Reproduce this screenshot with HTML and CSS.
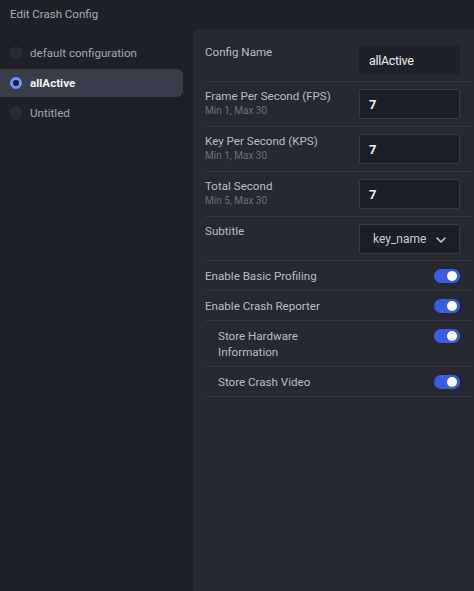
FILE: index.html
```html
<!DOCTYPE html>
<html>
<head>
<meta charset="utf-8">
<link rel="stylesheet" href="styles.css">
</head>
<body>
<div class="app">
  <header class="title">Edit Crash Config</header>
  <div class="main">
    <aside class="sidebar">
      <div class="item"><span class="radio"></span><span class="item-label">default configuration</span></div>
      <div class="item selected"><span class="radio"></span><span class="item-label">allActive</span></div>
      <div class="item"><span class="radio"></span><span class="item-label">Untitled</span></div>
    </aside>
    <section class="panel">
      <div class="row">
        <div class="label"><div class="name">Config Name</div></div>
        <div class="field plain">allActive</div>
      </div>
      <div class="row">
        <div class="label"><div class="name">Frame Per Second (FPS)</div><div class="hint">Min 1, Max 30</div></div>
        <div class="field num">7</div>
      </div>
      <div class="row">
        <div class="label"><div class="name">Key Per Second (KPS)</div><div class="hint">Min 1, Max 30</div></div>
        <div class="field num">7</div>
      </div>
      <div class="row">
        <div class="label"><div class="name">Total Second</div><div class="hint">Min 5, Max 30</div></div>
        <div class="field num">7</div>
      </div>
      <div class="row last-field">
        <div class="label"><div class="name">Subtitle</div></div>
        <div class="field select"><span>key_name</span>
          <svg class="chev" width="10" height="6" viewBox="0 0 10 6"><path d="M1 1 L5 5 L9 1" fill="none" stroke="#c8cad0" stroke-width="1.6" stroke-linecap="round" stroke-linejoin="round"/></svg>
        </div>
      </div>
      <div class="row trow">
        <div class="tlabel">Enable Basic Profiling</div>
        <span class="toggle"><span class="knob"></span></span>
      </div>
      <div class="row trow">
        <div class="tlabel">Enable Crash Reporter</div>
        <span class="toggle"><span class="knob"></span></span>
      </div>
      <div class="row trow sub">
        <div class="tlabel">Store Hardware Information</div>
        <span class="toggle"><span class="knob"></span></span>
      </div>
      <div class="row trow sub">
        <div class="tlabel">Store Crash Video</div>
        <span class="toggle"><span class="knob"></span></span>
      </div>
    </section>
  </div>
</div>
</body>
</html>
```

FILE: styles.css
```css
html, body {
  margin: 0;
  padding: 0;
  height: 100%;
  background: #1f2129;
  font-family: Roboto, "Liberation Sans", sans-serif;
  font-size: 11.6px;
  color: #b9bcc4;
}
.app {
  display: flex;
  flex-direction: column;
  height: 591px;
}
.title {
  height: 29px;
  line-height: 28px;
  padding-left: 10px;
  color: #a9acb4;
  font-size: 11.5px;
}
.main {
  flex: 1;
  display: flex;
  gap: 10px;
}
.sidebar {
  width: 183px;
  padding-top: 10px;
  display: flex;
  flex-direction: column;
  gap: 2px;
}
.item {
  height: 28px;
  display: flex;
  align-items: center;
  padding-left: 10px;
  gap: 8px;
  color: #a3a6af;
  font-size: 11.6px;
  border-radius: 0 6px 6px 0;
}
.item.selected {
  background: #393c49;
  color: #f2f3f5;
  font-weight: 700;
}
.radio {
  width: 12px;
  height: 12px;
  box-sizing: border-box;
  border-radius: 50%;
  background: #272a33;
  border: 1px solid #30333d;
  flex: none;
}
.selected .radio {
  background: #1c1f2a;
  border: 3px solid #7092ff;
}
.panel {
  flex: 1;
  background: #262932;
  border-top-left-radius: 4px;
  padding: 8px 2px 0 12px;
}
.row {
  display: grid;
  grid-template-columns: 1fr 101px;
  column-gap: 10px;
  padding: 7px 12px 7px 0;
  border-bottom: 1px solid #33363f;
  align-items: start;
}
.row:first-child {
  padding-top: 8px;
  padding-bottom: 7px;
}
.row.last-field {
  padding-bottom: 6px;
}
.name {
  line-height: 14px;
  color: #b9bcc4;
  font-size: 11.6px;
}
.hint {
  font-size: 10px;
  line-height: 12px;
  color: #6b6f79;
  margin-top: 2px;
}
.field {
  height: 30px;
  box-sizing: border-box;
  background: #1c1e26;
  border: 1px solid #373a44;
  border-radius: 2px;
  display: flex;
  align-items: center;
  padding-left: 9px;
  color: #eceef1;
}
.field.plain {
  height: 28px;
  margin-top: 1px;
  border-color: transparent;
  background: #1f2129;
  letter-spacing: -0.3px;
  font-size: 12.5px;
}
.field.num {
  font-weight: 700;
  font-size: 13px;
}
.field.select {
  padding-left: 13px;
  padding-right: 13px;
  justify-content: space-between;
  color: #c8cad0;
  font-size: 12px;
}
.chev {
  margin-top: 1px;
}
.trow {
  padding-top: 7px;
  padding-bottom: 6px;
}
.tlabel {
  line-height: 16px;
  color: #b9bcc4;
  font-size: 11.6px;
}
.sub .tlabel {
  padding-left: 13px;
}
.toggle {
  justify-self: end;
  width: 26px;
  height: 14px;
  margin-top: 1px;
  border-radius: 7px;
  background: #3a5ce0;
  position: relative;
}
.knob {
  position: absolute;
  right: 3px;
  top: 2px;
  width: 10px;
  height: 10px;
  border-radius: 50%;
  background: #ffffff;
}
```
